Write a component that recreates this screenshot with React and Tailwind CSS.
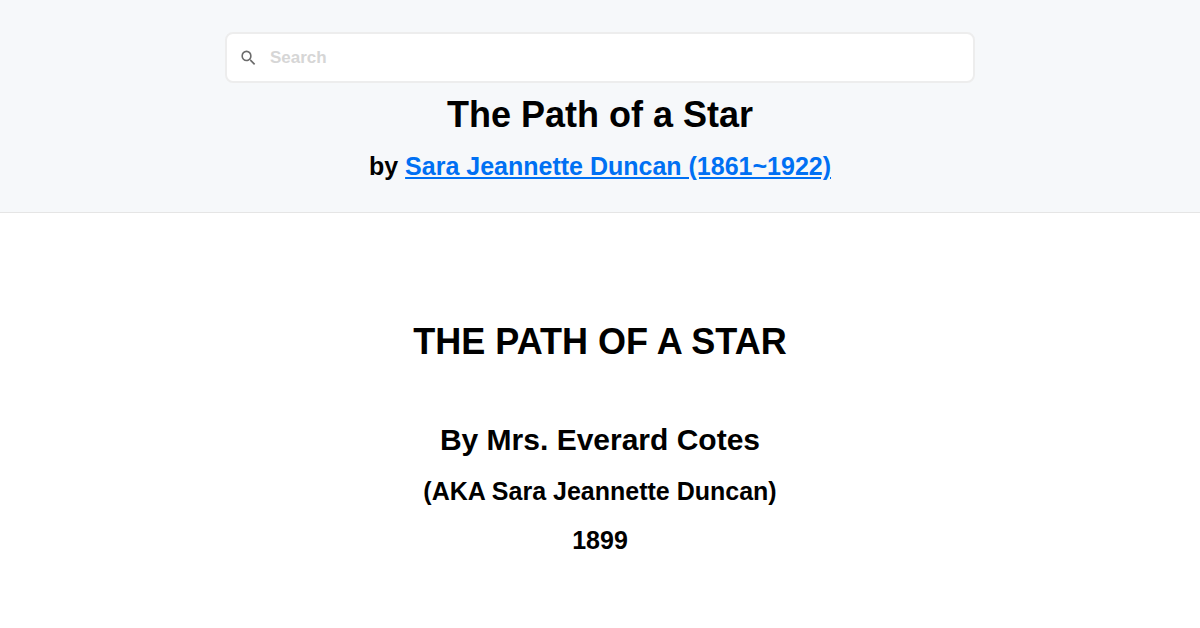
const SearchIcon = () => (
    <svg viewBox="0 0 24 24" preserveAspectRatio="none" fill="currentColor" className="h-5 w-[19px] shrink-0 text-[#6b6b6b]" aria-hidden="true">
        <path d="M15.5 14h-.79l-.28-.27A6.471 6.471 0 0 0 16 9.5 6.5 6.5 0 1 0 9.5 16c1.61 0 3.09-.59 4.23-1.57l.27.28v.79l5 4.99L20.49 19l-4.99-5zm-6 0C7.01 14 5 11.99 5 9.5S7.01 5 9.5 5 14 7.01 14 9.5 11.99 14 9.5 14z" />
    </svg>
)

const App = () => {
    return (
        <div className="min-h-screen bg-white text-center font-['Liberation_Sans',Arial,sans-serif] font-bold text-black">
            <header className="border-b border-[#e5e5e5] bg-[#f6f8fa] px-4 pt-8 pb-[30px]">
                <form role="search" className="mx-auto flex h-[51px] max-w-[750px] items-center gap-3 rounded-lg border-2 border-[#ededed] bg-white px-3">
                    <SearchIcon />
                    <input
                        type="search"
                        aria-label="Search"
                        placeholder="Search"
                        className="min-w-0 flex-1 text-[17px] font-bold outline-none placeholder:text-[#d6d6d6]"
                    />
                </form>
                <h1 className="mt-2 text-[36px] leading-[48px] font-bold">The Path of a Star</h1>
                <h3 className="mt-3 text-[25px] leading-[31px] font-bold">
                    by <a href="#author" className="text-[#0070f3] underline">Sara Jeannette Duncan (1861~1922)</a>
                </h3>
            </header>
            <main className="px-4 pt-[105px]">
                <h1 className="text-[36px] leading-[48px] font-bold">THE PATH OF A STAR</h1>
                <h2 className="mt-14 text-[30px] leading-9 font-bold">By Mrs. Everard Cotes</h2>
                <h3 className="mt-[18px] text-[25px] leading-[31px] font-bold">(AKA Sara Jeannette Duncan)</h3>
                <h3 className="mt-[18px] text-[25px] leading-[31px] font-bold">1899</h3>
            </main>
        </div>
    )
}

export default App
